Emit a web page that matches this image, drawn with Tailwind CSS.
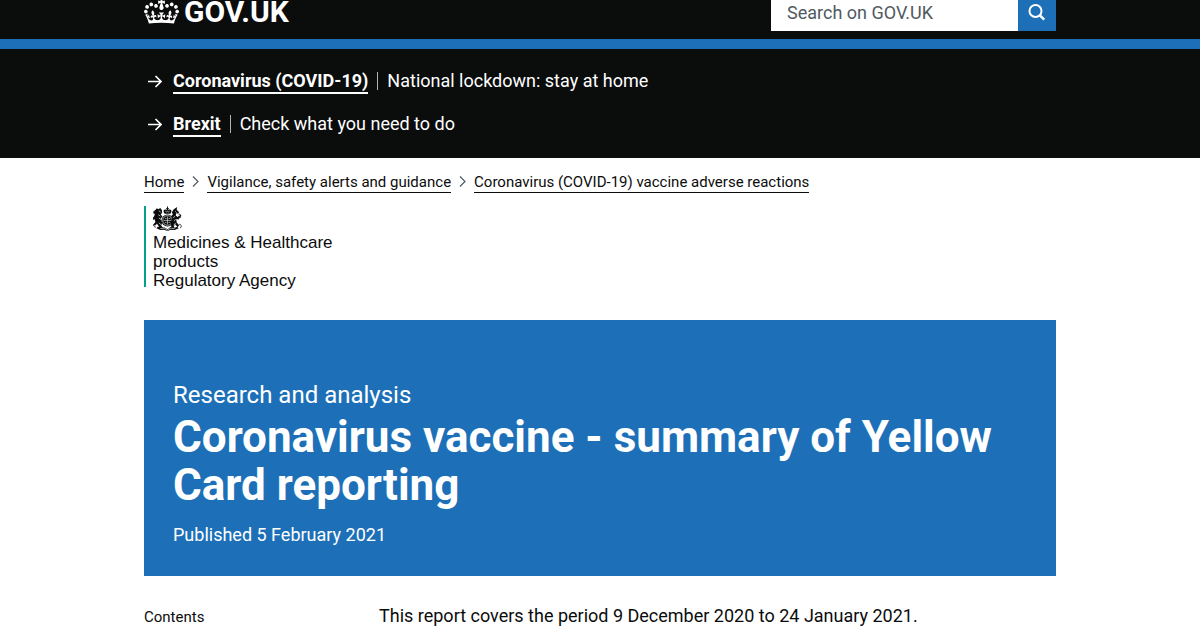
<!DOCTYPE html>
<html lang="en">

<head>
    <meta charset="UTF-8">
    <meta name="viewport" content="width=device-width, initial-scale=1.0">
    <title>Coronavirus vaccine - summary of Yellow Card reporting - GOV.UK</title>
    <script src="https://cdn.jsdelivr.net/npm/@tailwindcss/browser@4"></script>
</head>

<body class="bg-white text-[#0b0c0c] font-[Roboto,sans-serif] overflow-x-hidden">
    <header class="bg-[#0b0c0c] text-white">
        <div class="max-w-[912px] mx-auto h-[39px] flex items-start justify-between">
            <a href="#" class="flex items-end h-6 gap-[5px]" aria-label="GOV.UK">
                <svg class="w-[35px] h-[26px] shrink-0" viewBox="0 0 132 97" fill="currentColor" aria-hidden="true">
                    <path d="M25 30.2c3.5 1.5 7.7-.2 9.1-3.7 1.5-3.6-.2-7.8-3.9-9.2-3.6-1.4-7.6.3-9.1 3.9-1.4 3.5.3 7.5 3.9 9zM9 39.5c3.6 1.5 7.8-.2 9.2-3.7 1.5-3.6-.2-7.8-3.9-9.1-3.6-1.5-7.6.2-9.1 3.8-1.4 3.5.3 7.5 3.8 9zM4.4 57.2c3.5 1.5 7.7-.2 9.1-3.8 1.5-3.6-.2-7.7-3.9-9.1-3.5-1.5-7.6.3-9.1 3.8-1.4 3.5.3 7.6 3.9 9.1zm38.3-21.4c3.5 1.5 7.7-.2 9.1-3.8 1.5-3.6-.2-7.7-3.9-9.1-3.6-1.5-7.6.3-9.1 3.8-1.3 3.6.4 7.7 3.9 9.1zm64.4-5.6c-3.6 1.5-7.8-.2-9.1-3.7-1.5-3.6.2-7.8 3.8-9.2 3.6-1.4 7.7.3 9.2 3.9 1.3 3.5-.4 7.5-3.9 9zm15.9 9.3c-3.6 1.5-7.7-.2-9.1-3.7-1.5-3.6.2-7.8 3.7-9.1 3.6-1.5 7.7.2 9.2 3.8 1.5 3.5-.3 7.5-3.8 9zm4.7 17.7c-3.6 1.5-7.8-.2-9.2-3.8-1.5-3.6.2-7.7 3.9-9.1 3.6-1.5 7.7.3 9.2 3.8 1.3 3.5-.4 7.6-3.9 9.1zM89.3 35.8c-3.6 1.5-7.8-.2-9.2-3.8-1.4-3.6.2-7.7 3.9-9.1 3.6-1.5 7.7.3 9.2 3.8 1.4 3.6-.3 7.7-3.9 9.1zM69.7 17.7l8.9 4.7V9.3l-8.9 2.8c-.2-.3-.5-.6-.9-.9L72.4 0H59.6l3.5 11.2c-.3.3-.6.5-.9.9l-8.8-2.8v13.1l8.8-4.7c.3.3.6.7.9.9l-5 15.4v.1c-.2.8-.4 1.6-.4 2.4 0 4.1 3.1 7.5 7 8.1h.2c.3 0 .7.1 1 .1.4 0 .7 0 1-.1h.2c4-.6 7.1-4.1 7.1-8.1 0-.8-.1-1.7-.4-2.4V34l-5.1-15.4c.4-.2.7-.6 1-.9zM66 92.8c16.9 0 32.8 1.1 47.1 3.2 4-16.9 8.9-26.7 14-33.5l-9.6-3.4c1 4.9 1.1 7.2 0 10.2-1.5-1.4-3-4.3-4.2-8.7L108.6 76c2.8-2 5-3.2 7.5-3.3-4.4 9.4-10 11.9-13.6 11.2-4.3-.8-6.3-4.6-5.6-7.9 1-4.7 5.7-5.9 8-.5 4.3-8.7-3-11.4-7.6-8.8 7.1-7.2 7.9-13.5 2.1-21.1-8 6.1-8.1 12.3-4.5 20.8-4.7-5.4-12.1-2.5-9.5 6.2 3.4-5.2 7.9-2 7.2 3.1-.6 4.3-6.4 7.8-13.5 7.2-10.3-.9-10.9-8-11.2-13.8 2.5-.5 7.1 1.8 11 7.3L80.2 60c-4.1 4.4-8 5.3-12.3 5.4 1.4-4.4 8-11.6 8-11.6H55.5s6.4 7.2 7.9 11.6c-4.2-.1-8-1-12.3-5.4l1.4 16.4c3.9-5.5 8.5-7.7 10.9-7.3-.3 5.8-.9 12.8-11.1 13.8-7.2.6-12.9-2.9-13.5-7.2-.7-5 3.8-8.3 7.1-3.1 2.7-8.7-4.6-11.6-9.4-6.2 3.7-8.5 3.6-14.7-4.6-20.8-5.8 7.6-5 13.9 2.2 21.1-4.7-2.6-11.9.1-7.7 8.8 2.3-5.5 7.1-4.2 8.1.5.7 3.3-1.3 7.1-5.7 7.9-3.5.7-9-1.8-13.5-11.2 2.5.1 4.7 1.3 7.5 3.3l-4.7-15.4c-1.2 4.4-2.7 7.2-4.3 8.7-1.1-3-.9-5.3 0-10.2l-9.5 3.4c5 6.9 9.9 16.7 14 33.5 14.8-2.1 30.8-3.2 47.7-3.2z" />
                </svg>
                <span class="text-[30px] leading-6 font-bold">GOV.UK</span>
            </a>
            <form class="flex h-[31px]">
                <label for="site-search" class="sr-only">Search on GOV.UK</label>
                <input id="site-search" type="search" placeholder="Search on GOV.UK"
                    class="w-[247px] bg-white px-4 pb-[5px] text-[18px] leading-6 text-[#0b0c0c] placeholder:text-[#505a5f]">
                <button type="submit" aria-label="Search" class="w-[38px] bg-[#1d70b8] flex justify-center pt-1">
                    <svg class="w-[18px] h-[18px]" viewBox="0 0 18 18" fill="none" stroke="currentColor" stroke-width="2" aria-hidden="true">
                        <circle cx="7.500" cy="7" r="6" />
                        <path d="M11.700 11.200l4.500 4.500" stroke-width="2.500" />
                    </svg>
                </button>
            </form>
        </div>
        <div class="h-[10px] bg-[#1d70b8]"></div>
        <nav class="max-w-[912px] mx-auto pt-5 pb-[21px] flex flex-col gap-[18px] text-[18px] leading-[23px]" aria-label="Announcements">
            <div class="flex items-start">
                <svg class="w-[14px] h-6 ml-1 mr-[11px]" viewBox="0 0 14 24" fill="none" stroke="currentColor" stroke-width="1.700" aria-hidden="true">
                    <path d="M0 12.500h13M7.500 7l5.500 5.500L7.500 18" />
                </svg>
                <a href="#" class="font-bold border-b-2 border-white">Coronavirus (COVID-19)</a>
                <span class="ml-[9px] mt-[3px] border-l border-[#b1b4b6] pl-[9px] leading-[18px]">National lockdown: stay at home</span>
            </div>
            <div class="flex items-start">
                <svg class="w-[14px] h-6 ml-1 mr-[11px]" viewBox="0 0 14 24" fill="none" stroke="currentColor" stroke-width="1.700" aria-hidden="true">
                    <path d="M0 12.500h13M7.500 7l5.500 5.500L7.500 18" />
                </svg>
                <a href="#" class="font-bold border-b-2 border-white">Brexit</a>
                <span class="ml-[9px] mt-[3px] border-l border-[#b1b4b6] pl-[9px] leading-[18px]">Check what you need to do</span>
            </div>
        </nav>
    </header>

    <div class="max-w-[912px] mx-auto">
        <nav class="pt-[14px] flex items-start text-[15px] leading-5" aria-label="Breadcrumb">
            <a href="#" class="border-b border-[#0b0c0c]">Home</a>
            <svg class="w-[7px] h-5 mx-2" viewBox="0 0 7 20" fill="none" stroke="#505a5f" stroke-width="1.200" aria-hidden="true">
                <path d="M1 4.500l5 5-5 5" />
            </svg>
            <a href="#" class="border-b border-[#0b0c0c]">Vigilance, safety alerts and guidance</a>
            <svg class="w-[7px] h-5 mx-2" viewBox="0 0 7 20" fill="none" stroke="#505a5f" stroke-width="1.200" aria-hidden="true">
                <path d="M1 4.500l5 5-5 5" />
            </svg>
            <a href="#" class="border-b border-[#0b0c0c]">Coronavirus (COVID-19) vaccine adverse reactions</a>
        </nav>

        <a href="#" class="flow-root w-fit h-[81px] mt-[13px] border-l-2 border-[#00a28a] pl-[7px] font-['Liberation_Sans',sans-serif] text-[17px] leading-[19px]">
            <!-- Royal coat of arms -->
            <svg class="w-[29px] h-[26px] mb-px" viewBox="0 0 60 52" fill="#0b0c0c" aria-hidden="true">
                <path d="M29 0h2v3h2v2h-2v2c5-2 8 0 7 4l-2 4H24l-2-4c-1-4 2-6 7-4V5h-2V3h2z" />
                <path d="M25 9l3 3 2-3 2 3 3-3" fill="none" stroke="#fff" />
                <circle cx="30" cy="29" r="12.500" />
                <circle cx="30" cy="29" r="10" fill="none" stroke="#fff" stroke-width="1.300" />
                <path d="M30 21v16M22 29h16M25 25h3M32 25h4M25 33h3M32 33h4" stroke="#fff" stroke-width="1.200" />
                <path d="M8 4l3 2 4-3 3 4 1 6-3 3 3 5-3 5 3 8-2 6 4 4-4 3-7-2 2-4-4-5-4 4-3-2 4-6-2-6-4 3-2-2 5-6 2-5-3-4z" />
                <path d="M3 16c-4-6 1-9 4-5M4 35c-5 3-3 7 2 8" fill="none" stroke="#0b0c0c" stroke-width="1.700" />
                <path d="M50 1l-1 6 5 5-2 3-4-1-1 5 4 3 6-5 1 2-5 8-5-1 1 7 5 6-3 4-5-6-3 4 2 4-7 3-4-4 4-2-2-8 4-8-2-6 3-4-2-4 4-6z" />
                <path d="M56 24c4-8-2-10-3-6M54 37c5 0 6 5 2 8" fill="none" stroke="#0b0c0c" stroke-width="1.700" />
                <path d="M12 9l4 3M11 17l4 3M12 24l5 3M12 34l5 4M46 10l3 3M45 20l-3 4M47 27l-4 3M47 34l-4 5" stroke="#fff" stroke-width="1.400" />
                <path d="M10 42l7 3 6-2 7 4 7-4 6 2 7-3 3 3-8 4-8-1-7 3-7-3-8 1-8-4z" />
                <path d="M15 46l8-1 7 4 7-4 8 1" fill="none" stroke="#fff" stroke-width="1.200" />
            </svg>
            <span class="block">Medicines &amp; Healthcare<br>products<br>Regulatory Agency</span>
        </a>

        <section class="mt-[33px] bg-[#1d70b8] text-white px-[29px] pt-[59px] pb-[29px]">
            <p class="mb-[2px] text-[24px] leading-8">Research and analysis</p>
            <h1 class="text-[44px] leading-[48px] font-bold">Coronavirus vaccine - summary of Yellow Card reporting</h1>
            <p class="mt-[14px] text-[18px] leading-6">Published 5 February 2021</p>
        </section>

        <main class="mt-7 grid grid-cols-[235px_1fr] items-baseline">
            <h2 class="text-[15px] leading-6">Contents</h2>
            <p class="text-[18px] leading-6">This report covers the period 9 December 2020 to 24 January 2021.</p>
        </main>
    </div>
</body>

</html>
